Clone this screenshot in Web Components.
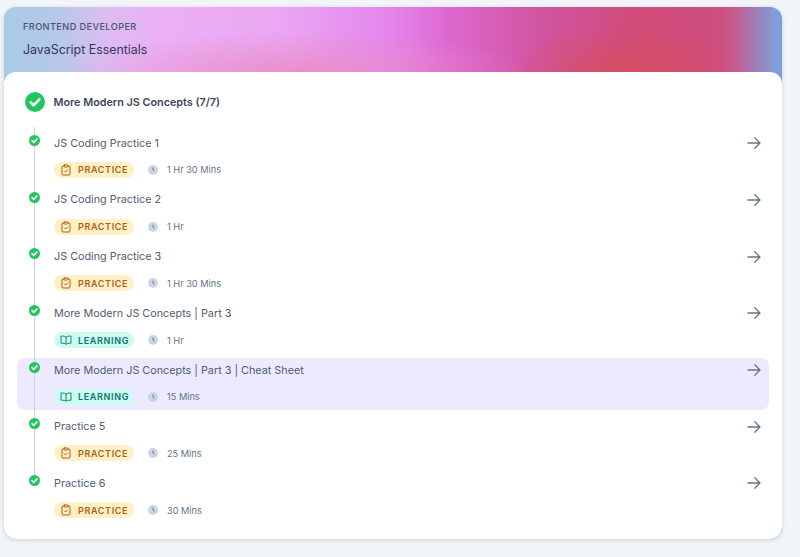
<!DOCTYPE html>
<html lang="en">
<head>
<meta charset="utf-8">
<title>JavaScript Essentials</title>
<style>
  html, body { margin: 0; height: 100%; }
  body { background: #f1f5f9; font-family: Inter, "Liberation Sans", sans-serif; overflow: hidden; }
</style>
</head>
<body>
<course-card track="FRONTEND DEVELOPER" course="JavaScript Essentials">
  <topic-head>More Modern JS Concepts (7/7)</topic-head>
  <topic-row kind="practice" time="1 Hr 30 Mins">JS Coding Practice 1</topic-row>
  <topic-row kind="practice" time="1 Hr">JS Coding Practice 2</topic-row>
  <topic-row kind="practice" time="1 Hr 30 Mins">JS Coding Practice 3</topic-row>
  <topic-row kind="learning" time="1 Hr">More Modern JS Concepts | Part 3</topic-row>
  <topic-row kind="learning" time="15 Mins" active>More Modern JS Concepts | Part 3 | Cheat Sheet</topic-row>
  <topic-row kind="practice" time="25 Mins">Practice 5</topic-row>
  <topic-row kind="practice" time="30 Mins" last>Practice 6</topic-row>
</course-card>

<script>
// check mark in a green circle, used by the head and by every row
const checkIcon = (size, sw) => `
  <svg width="${size}" height="${size}" viewBox="0 0 20 20" style="display:block">
    <circle cx="10" cy="10" r="10" fill="#22c55e"/>
    <path d="M5.6 10.3l3 3 5.8-6" fill="none" stroke="#fff" stroke-width="${sw}" stroke-linecap="round" stroke-linejoin="round"/>
  </svg>`;

class CourseCard extends HTMLElement {
  constructor() {
    super();
    const shadow = this.attachShadow({mode: 'open'});
    shadow.innerHTML = `
      <style>
        :host { display: block; padding: 7px 18px 18px 4px; }
        .card {
          border-radius: 12px;
          box-shadow: 0 1px 4px rgba(15, 23, 42, 0.16);
          height: 532px;
          overflow: hidden;
          display: flex;
          flex-direction: column;
          background:
            linear-gradient(90deg, rgba(125,160,222,0) 92%, rgba(125,160,222,0.12) 94%, rgba(125,160,222,0.5) 96.5%, #7da0dc 99.5%),
            radial-gradient(ellipse 120px 48px at 80% 66px, rgba(218,78,92,0.8) 0%, rgba(216,80,100,0) 100%),
            radial-gradient(ellipse 230px 42px at 38% 66px, rgba(233,140,196,0.85) 0%, rgba(233,140,196,0) 100%),
            linear-gradient(90deg, #a8cbe6 0%, #b6c8ea 7%, #dcbcf3 13%, #ebb0f6 20%, #eaa6f2 36%, #e484ec 50%, #dd68d0 57%, #d0549c 70%, #d04c78 82%, #cf4f80 92%, #c45c98 100%);
        }
        .top { height: 65px; box-sizing: border-box; padding: 14px 19px 0; }
        .track { font-size: 9.2px; font-weight: 500; letter-spacing: 0.4px; line-height: 12px; color: #475569; }
        .course { font-size: 12.4px; line-height: 16px; margin-top: 9px; color: #2f3a55; }
        .panel {
          flex: 1;
          background: #fff;
          border-radius: 12px;
          padding: 20px 13px 0;
          display: flex;
          flex-direction: column;
        }
        ::slotted(topic-row) { margin-bottom: 4.7px; }
      </style>
      <div class="card">
        <div class="top">
          <div class="track">${this.getAttribute('track')}</div>
          <div class="course">${this.getAttribute('course')}</div>
        </div>
        <div class="panel"><slot></slot></div>
      </div>
    `;
  }
}

class TopicHead extends HTMLElement {
  constructor() {
    super();
    const shadow = this.attachShadow({mode: 'open'});
    shadow.innerHTML = `
      <style>
        :host { display: flex; align-items: center; gap: 8.5px; height: 20px; padding-left: 8px; margin-bottom: 19.5px; }
        .label { font-size: 10.8px; font-weight: 600; color: #3b475c; }
      </style>
      ${checkIcon(20, 2.6)}
      <span class="label"><slot></slot></span>
    `;
  }
}

class TopicBadge extends HTMLElement {
  constructor() {
    super();
    const kind = this.getAttribute('kind');
    const icons = {
      practice: `<svg width="12" height="12" viewBox="0 0 24 24" fill="none" stroke="#b45f10" stroke-width="2" stroke-linecap="round" stroke-linejoin="round">
        <rect x="8" y="2" width="8" height="4" rx="1"/>
        <path d="M16 4h2a2 2 0 0 1 2 2v14a2 2 0 0 1-2 2H6a2 2 0 0 1-2-2V6a2 2 0 0 1 2-2h2"/>
        <path d="M9 14l2 2 4-4"/></svg>`,
      learning: `<svg width="12" height="10" viewBox="0 0 14 12" fill="none" stroke="#0f766e" stroke-width="1.1" stroke-linecap="round" stroke-linejoin="round">
        <path d="M7 2.6C6 1.6 4.5 1.2 1 1.2v8.6c3.5 0 5 .4 6 1.2 1-.8 2.5-1.2 6-1.2V1.2C9.5 1.2 8 1.6 7 2.6zM7 2.6V11"/></svg>`
    };
    const shadow = this.attachShadow({mode: 'open'});
    shadow.innerHTML = `
      <style>
        :host {
          display: flex; align-items: center; box-sizing: border-box;
          width: 80px; height: 16px; border-radius: 8px; padding-left: 6px;
          font-size: 9px; font-weight: 600; letter-spacing: 0.65px;
        }
        :host([kind="practice"]) { background: #fef0c7; color: #b45f10; }
        :host([kind="learning"]) { background: #ccfbf1; color: #0f766e; }
        .ic { width: 18px; display: flex; }
        svg { display: block; }
      </style>
      <span class="ic">${icons[kind]}</span>
      <span>${kind.toUpperCase()}</span>
    `;
  }
}
customElements.define('topic-badge', TopicBadge);

class TopicRow extends HTMLElement {
  constructor() {
    super();
    const shadow = this.attachShadow({mode: 'open'});
    shadow.innerHTML = `
      <style>
        :host {
          display: block; position: relative; box-sizing: border-box;
          height: 52px; border-radius: 8px; padding: 3.8px 8px 0 37px;
        }
        :host([active]) { background: #ede9fe; }
        /* timeline rail behind the check */
        .rail { position: absolute; left: 17px; top: -5px; bottom: -5px; width: 1px; background: #cbd5e1; }
        :host([last]) .rail { bottom: 44px; }
        .check { position: absolute; left: 12px; top: 3.5px; }
        .title { display: flex; justify-content: space-between; align-items: center; height: 16px; }
        .name { font-size: 10.8px; color: #4f5d73; }
        .meta { display: flex; align-items: center; margin-top: 10.7px; }
        .clock { display: block; margin-left: 14px; margin-right: 9px; }
        .time { font-size: 9.2px; color: #64748b; }
        .arrow { display: block; }
      </style>
      <span class="rail"></span>
      <span class="check">${checkIcon(11, 3)}</span>
      <div class="title">
        <span class="name"><slot></slot></span>
        <svg class="arrow" width="14" height="14" viewBox="0 0 14 14" fill="none" stroke="#64748b" stroke-width="1.3" stroke-linecap="round" stroke-linejoin="round">
          <path d="M1 7h12M7.8 1.8L13 7l-5.2 5.2"/>
        </svg>
      </div>
      <div class="meta">
        <topic-badge kind="${this.getAttribute('kind')}"></topic-badge>
        <svg class="clock" width="10" height="10" viewBox="0 0 10 10">
          <circle cx="5" cy="5" r="5" fill="#cbd5e1"/>
          <path d="M5 2.6V5l1.4 1.4" fill="none" stroke="#64748b" stroke-width="1"/>
        </svg>
        <span class="time">${this.getAttribute('time')}</span>
      </div>
    `;
  }
}

customElements.define('topic-head', TopicHead);
customElements.define('topic-row', TopicRow);
customElements.define('course-card', CourseCard);
</script>
</body>
</html>
